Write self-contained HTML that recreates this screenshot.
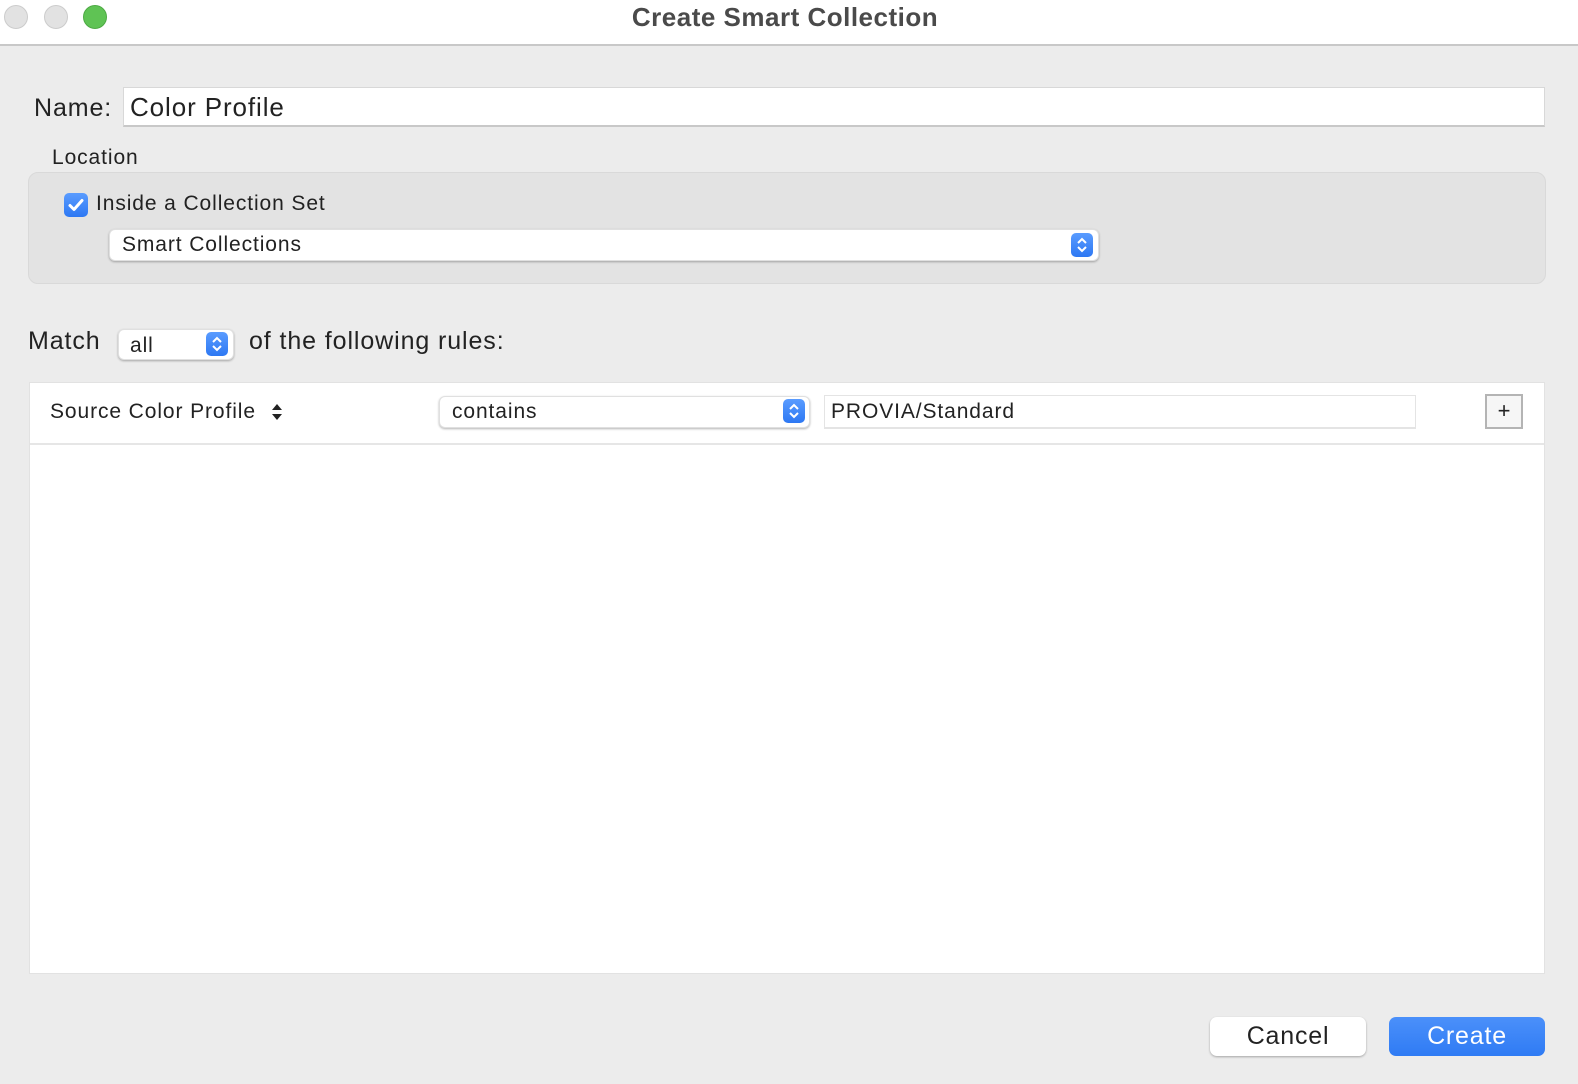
<!DOCTYPE html>
<html><head><style>
*{box-sizing:border-box;margin:0;padding:0}
body{width:1578px;height:1084px;background:#ececec;font-family:"Liberation Sans",Arial,sans-serif;color:#222;position:relative;overflow:hidden}
.abs{position:absolute}
.tb{left:0;top:0;width:1578px;height:46px;background:#fff;border-bottom:2px solid #c8c8c8}
.dot{width:24px;height:24px;border-radius:50%;top:5px;background:#e2e2e2;border:1px solid #ccc}
.title{top:2px;left:0;width:1570px;text-align:center;font-size:26px;font-weight:bold;color:#4a4a4a;letter-spacing:0.5px}
.field{background:#fff;border:1px solid #d8d8d8;border-bottom:2px solid #c8c8c8}
.pop{background:#fff;border-radius:6px;box-shadow:0 1px 2px rgba(0,0,0,.3);border:1px solid #e0e0e0}
.arr{width:22px;height:24px;border-radius:5px;background:linear-gradient(#5a9cff,#2d78f3)}
.t{font-size:22px;white-space:nowrap;letter-spacing:0.9px}
</style></head><body>
<div class="abs tb"></div>
<div class="abs dot" style="left:4px"></div>
<div class="abs dot" style="left:44px"></div>
<div class="abs dot" style="left:83px;background:#5fc354;border-color:#4daa44"></div>
<div class="abs title">Create Smart Collection</div>

<div class="abs t" style="left:34px;top:94px;font-size:25px">Name:</div>
<div class="abs field" style="left:123px;top:87px;width:1422px;height:40px"></div>
<div class="abs t" style="left:130px;top:92px;font-size:26px">Color Profile</div>

<div class="abs t" style="left:52px;top:146px;font-size:21px">Location</div>
<div class="abs" style="left:28px;top:172px;width:1518px;height:112px;background:#e3e3e3;border:1px solid #d9d9d9;border-radius:10px"></div>
<div class="abs" style="left:64px;top:193px;width:24px;height:24px;border-radius:5px;background:linear-gradient(#5a9cff,#2d78f3)">
<svg width="24" height="24"><path d="M6 12.5l4 4 8-9" stroke="#fff" stroke-width="3" fill="none" stroke-linecap="round" stroke-linejoin="round"/></svg></div>
<div class="abs t" style="left:96px;top:192px;font-size:21px">Inside a Collection Set</div>
<div class="abs pop" style="left:109px;top:229px;width:990px;height:32px"></div>
<div class="abs t" style="left:122px;top:233px;font-size:21px">Smart Collections</div>
<div class="abs arr" style="left:1071px;top:233px"><svg width="22" height="24"><path d="M7 10l4-4 4 4M7 14l4 4 4-4" stroke="#fff" stroke-width="2" fill="none"/></svg></div>

<div class="abs t" style="left:28px;top:327px;font-size:25px">Match</div>
<div class="abs pop" style="left:118px;top:329px;width:116px;height:31px"></div>
<div class="abs t" style="left:130px;top:334px;font-size:21px">all</div>
<div class="abs arr" style="left:206px;top:332px"><svg width="22" height="24"><path d="M7 10l4-4 4 4M7 14l4 4 4-4" stroke="#fff" stroke-width="2" fill="none"/></svg></div>
<div class="abs t" style="left:249px;top:327px;font-size:25px">of the following rules:</div>

<div class="abs" style="left:29px;top:382px;width:1516px;height:592px;background:#fff;border:1px solid #e2e2e2"></div>
<div class="abs" style="left:30px;top:443px;width:1514px;height:2px;background:#e6e6e6"></div>
<div class="abs t" style="left:50px;top:400px;font-size:21px">Source Color Profile</div>
<svg class="abs" style="left:270px;top:402px" width="14" height="20"><path d="M2 8l5-6 5 6zM2 12l5 6 5-6z" fill="#222"/></svg>
<div class="abs pop" style="left:439px;top:396px;width:371px;height:32px"></div>
<div class="abs t" style="left:452px;top:400px;font-size:21px">contains</div>
<div class="abs arr" style="left:783px;top:399px"><svg width="22" height="24"><path d="M7 10l4-4 4 4M7 14l4 4 4-4" stroke="#fff" stroke-width="2" fill="none"/></svg></div>
<div class="abs field" style="left:824px;top:395px;width:592px;height:34px;border-color:#e4e4e4"></div>
<div class="abs t" style="left:831px;top:400px;font-size:21px">PROVIA/Standard</div>
<div class="abs" style="left:1485px;top:394px;width:38px;height:35px;border:2px solid #b4b4b4;background:#f6f6f6;text-align:center;font-size:22px;line-height:30px">+</div>

<div class="abs" style="left:1210px;top:1017px;width:156px;height:39px;background:#fff;border-radius:7px;box-shadow:0 1px 2px rgba(0,0,0,.3);text-align:center;font-size:25px;line-height:38px;letter-spacing:0.8px">Cancel</div>
<div class="abs" style="left:1389px;top:1017px;width:156px;height:39px;background:linear-gradient(#4b90fa,#2f7bf4);border-radius:7px;color:#fff;text-align:center;font-size:25px;line-height:38px;letter-spacing:0.8px">Create</div>
</body></html>
